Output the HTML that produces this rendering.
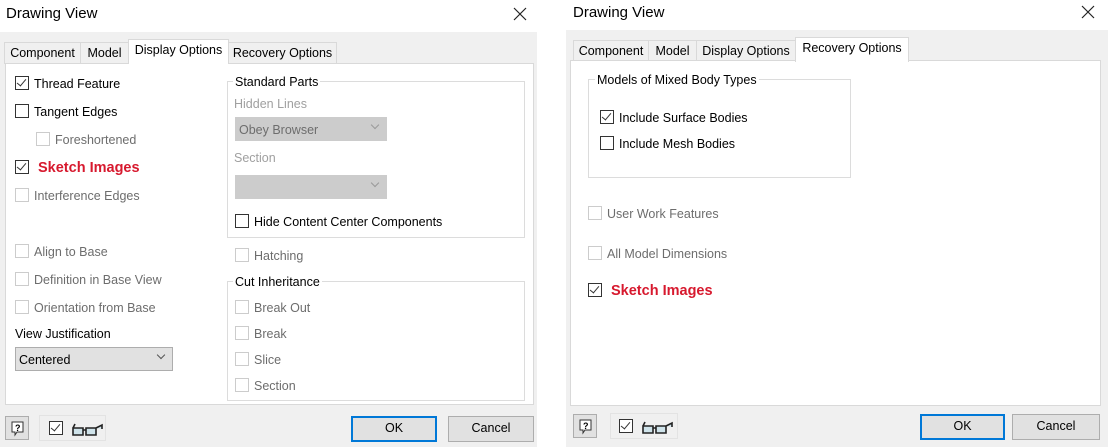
<!DOCTYPE html>
<html><head><meta charset="utf-8"><style>
*{margin:0;padding:0;box-sizing:border-box}
body{width:1108px;height:447px;background:#fff;position:relative;overflow:hidden;font-family:"Liberation Sans",sans-serif;font-size:12.5px;color:#000}
div,span{position:absolute}
.gray{background:#f0f0f0}
.title{font-size:15px;color:#000}
.panel{background:#fff;border:1px solid #d9d9d9}
.tab{height:22px;border:1px solid #d9d9d9;background:#f0f0f0;text-align:center;line-height:20px;border-bottom:none}
.tab.sel{background:#fff;height:25px;z-index:2}
.cb{width:14px;height:14px;border:1px solid #333;background:#fff}
.cb.dis{border-color:#ccc}
.cb.chk::after{content:"";position:absolute;left:3px;top:0px;width:4px;height:8px;border:solid #333;border-width:0 1.3px 1.3px 0;transform:rotate(40deg)}
.lbl{white-space:nowrap;line-height:14px}
.dis-t{color:#6d6d6d}
.gt{color:#a0a0a0}
.red{color:#d7192e;font-weight:bold;font-size:14.5px}
.grp{border:1px solid #dcdcdc}
.gl{background:#fff;padding:0 2px;line-height:14px;white-space:nowrap}
.combo{background:#ccc;border:1px solid #ccc}
.combo .ar{right:8px;top:4px;width:6px;height:6px;border:solid #999;border-width:0 1px 1px 0;transform:rotate(45deg)}
.btn{background:#e1e1e1;border:1px solid #adadad;text-align:center;line-height:22px}
.ok{border:2px solid #0078d7;line-height:20px}
</style></head><body>

<!-- LEFT DIALOG -->
<div class="gray" style="left:0;top:32px;width:537px;height:415px"></div>
<div class="title" style="left:6px;top:5px">Drawing View</div>
<div style="left:512px;top:6px;width:16px;height:16px"><svg width="16" height="16"><path d="M2 2L14 14M14 2L2 14" stroke="#222" stroke-width="1.2"/></svg></div>

<div class="tab" style="left:4px;top:42px;width:77px">Component</div>
<div class="tab" style="left:80px;top:42px;width:49px">Model</div>
<div class="tab sel" style="left:128px;top:39px;width:101px">Display Options</div>
<div class="tab" style="left:228px;top:42px;width:109px">Recovery Options</div>
<div class="panel" style="left:5px;top:63px;width:529px;height:342px"></div>

<div class="cb chk" style="left:15px;top:76px"></div><span class="lbl" style="left:34px;top:77px">Thread Feature</span>
<div class="cb" style="left:15px;top:104px"></div><span class="lbl" style="left:34px;top:105px">Tangent Edges</span>
<div class="cb dis" style="left:36px;top:132px"></div><span class="lbl dis-t" style="left:55px;top:133px">Foreshortened</span>
<div class="cb chk" style="left:15px;top:160px"></div><span class="lbl red" style="left:38px;top:161px">Sketch Images</span>
<div class="cb dis" style="left:15px;top:188px"></div><span class="lbl dis-t" style="left:34px;top:189px">Interference Edges</span>
<div class="cb dis" style="left:15px;top:244px"></div><span class="lbl dis-t" style="left:34px;top:245px">Align to Base</span>
<div class="cb dis" style="left:15px;top:272px"></div><span class="lbl dis-t" style="left:34px;top:273px">Definition in Base View</span>
<div class="cb dis" style="left:15px;top:300px"></div><span class="lbl dis-t" style="left:34px;top:301px">Orientation from Base</span>
<span class="lbl" style="left:15px;top:327px">View Justification</span>
<div class="combo" style="left:15px;top:347px;width:158px;height:24px;background:#e1e1e1;border-color:#adadad"><span style="left:3px;top:5px">Centered</span><div class="ar" style="border-color:#555"></div></div>

<div class="grp" style="left:227px;top:81px;width:298px;height:157px"></div>
<span class="gl" style="left:233px;top:75px">Standard Parts</span>
<span class="lbl gt" style="left:234px;top:97px">Hidden Lines</span>
<div class="combo" style="left:235px;top:117px;width:152px;height:24px"><span style="left:3px;top:5px;color:#6d6d6d">Obey Browser</span><div class="ar"></div></div>
<span class="lbl gt" style="left:234px;top:151px">Section</span>
<div class="combo" style="left:235px;top:175px;width:152px;height:24px"><div class="ar"></div></div>
<div class="cb" style="left:235px;top:214px"></div><span class="lbl" style="left:254px;top:215px">Hide Content Center Components</span>
<div class="cb dis" style="left:235px;top:248px"></div><span class="lbl dis-t" style="left:254px;top:249px">Hatching</span>
<div class="grp" style="left:227px;top:281px;width:298px;height:120px"></div>
<span class="gl" style="left:233px;top:275px">Cut Inheritance</span>
<div class="cb dis" style="left:235px;top:300px"></div><span class="lbl dis-t" style="left:254px;top:301px">Break Out</span>
<div class="cb dis" style="left:235px;top:326px"></div><span class="lbl dis-t" style="left:254px;top:327px">Break</span>
<div class="cb dis" style="left:235px;top:352px"></div><span class="lbl dis-t" style="left:254px;top:353px">Slice</span>
<div class="cb dis" style="left:235px;top:378px"></div><span class="lbl dis-t" style="left:254px;top:379px">Section</span>

<div style="left:5px;top:416px;width:24px;height:24px;background:#e1e1e1;border:1px solid #adadad"><svg width="22" height="22"><path d="M6 5h11v10h-6l-2 3v-3H6z" fill="#fff" stroke="#333"/><text x="9" y="14" font-size="9" font-weight="bold" font-family="Liberation Sans">?</text></svg></div>
<div style="left:39px;top:415px;width:67px;height:26px;border:1px solid #e3e3e3"><div class="cb chk" style="left:9px;top:5px"></div><svg style="position:absolute;left:30px;top:4px" width="36" height="18"><path d="M3 8h10v7H3zM16 8h10v7H16zM13 10h3M3 8l2-4M26 8l6-3v4" fill="#cfe3ea" stroke="#222" stroke-width="1.6"/></svg></div>
<div class="btn ok" style="left:351px;top:416px;width:86px;height:26px">OK</div>
<div class="btn" style="left:448px;top:416px;width:86px;height:26px">Cancel</div>

<!-- RIGHT DIALOG -->
<div class="gray" style="left:566px;top:30px;width:542px;height:417px"></div>
<div class="title" style="left:573px;top:4px">Drawing View</div>
<div style="left:1080px;top:4px;width:16px;height:16px"><svg width="16" height="16"><path d="M2 2L14 14M14 2L2 14" stroke="#222" stroke-width="1.2"/></svg></div>

<div class="tab" style="left:573px;top:40px;width:76px">Component</div>
<div class="tab" style="left:648px;top:40px;width:49px">Model</div>
<div class="tab" style="left:696px;top:40px;width:100px">Display Options</div>
<div class="tab sel" style="left:795px;top:37px;width:114px">Recovery Options</div>
<div class="panel" style="left:570px;top:60px;width:531px;height:346px"></div>

<div class="grp" style="left:588px;top:79px;width:263px;height:99px"></div>
<span class="gl" style="left:595px;top:73px">Models of Mixed Body Types</span>
<div class="cb chk" style="left:600px;top:110px"></div><span class="lbl" style="left:619px;top:111px">Include Surface Bodies</span>
<div class="cb" style="left:600px;top:136px"></div><span class="lbl" style="left:619px;top:137px">Include Mesh Bodies</span>
<div class="cb dis" style="left:588px;top:206px"></div><span class="lbl dis-t" style="left:607px;top:207px">User Work Features</span>
<div class="cb dis" style="left:588px;top:246px"></div><span class="lbl dis-t" style="left:607px;top:247px">All Model Dimensions</span>
<div class="cb chk" style="left:588px;top:283px"></div><span class="lbl red" style="left:611px;top:284px">Sketch Images</span>

<div style="left:573px;top:414px;width:24px;height:24px;background:#e1e1e1;border:1px solid #adadad"><svg width="22" height="22"><path d="M6 5h11v10h-6l-2 3v-3H6z" fill="#fff" stroke="#333"/><text x="9" y="14" font-size="9" font-weight="bold" font-family="Liberation Sans">?</text></svg></div>
<div style="left:610px;top:413px;width:68px;height:26px;border:1px solid #e3e3e3"><div class="cb chk" style="left:8px;top:5px"></div><svg style="position:absolute;left:29px;top:4px" width="36" height="18"><path d="M3 8h10v7H3zM16 8h10v7H16zM13 10h3M3 8l2-4M26 8l6-3v4" fill="#cfe3ea" stroke="#222" stroke-width="1.6"/></svg></div>
<div class="btn ok" style="left:920px;top:414px;width:85px;height:26px">OK</div>
<div class="btn" style="left:1012px;top:414px;width:88px;height:26px">Cancel</div>
</body></html>
